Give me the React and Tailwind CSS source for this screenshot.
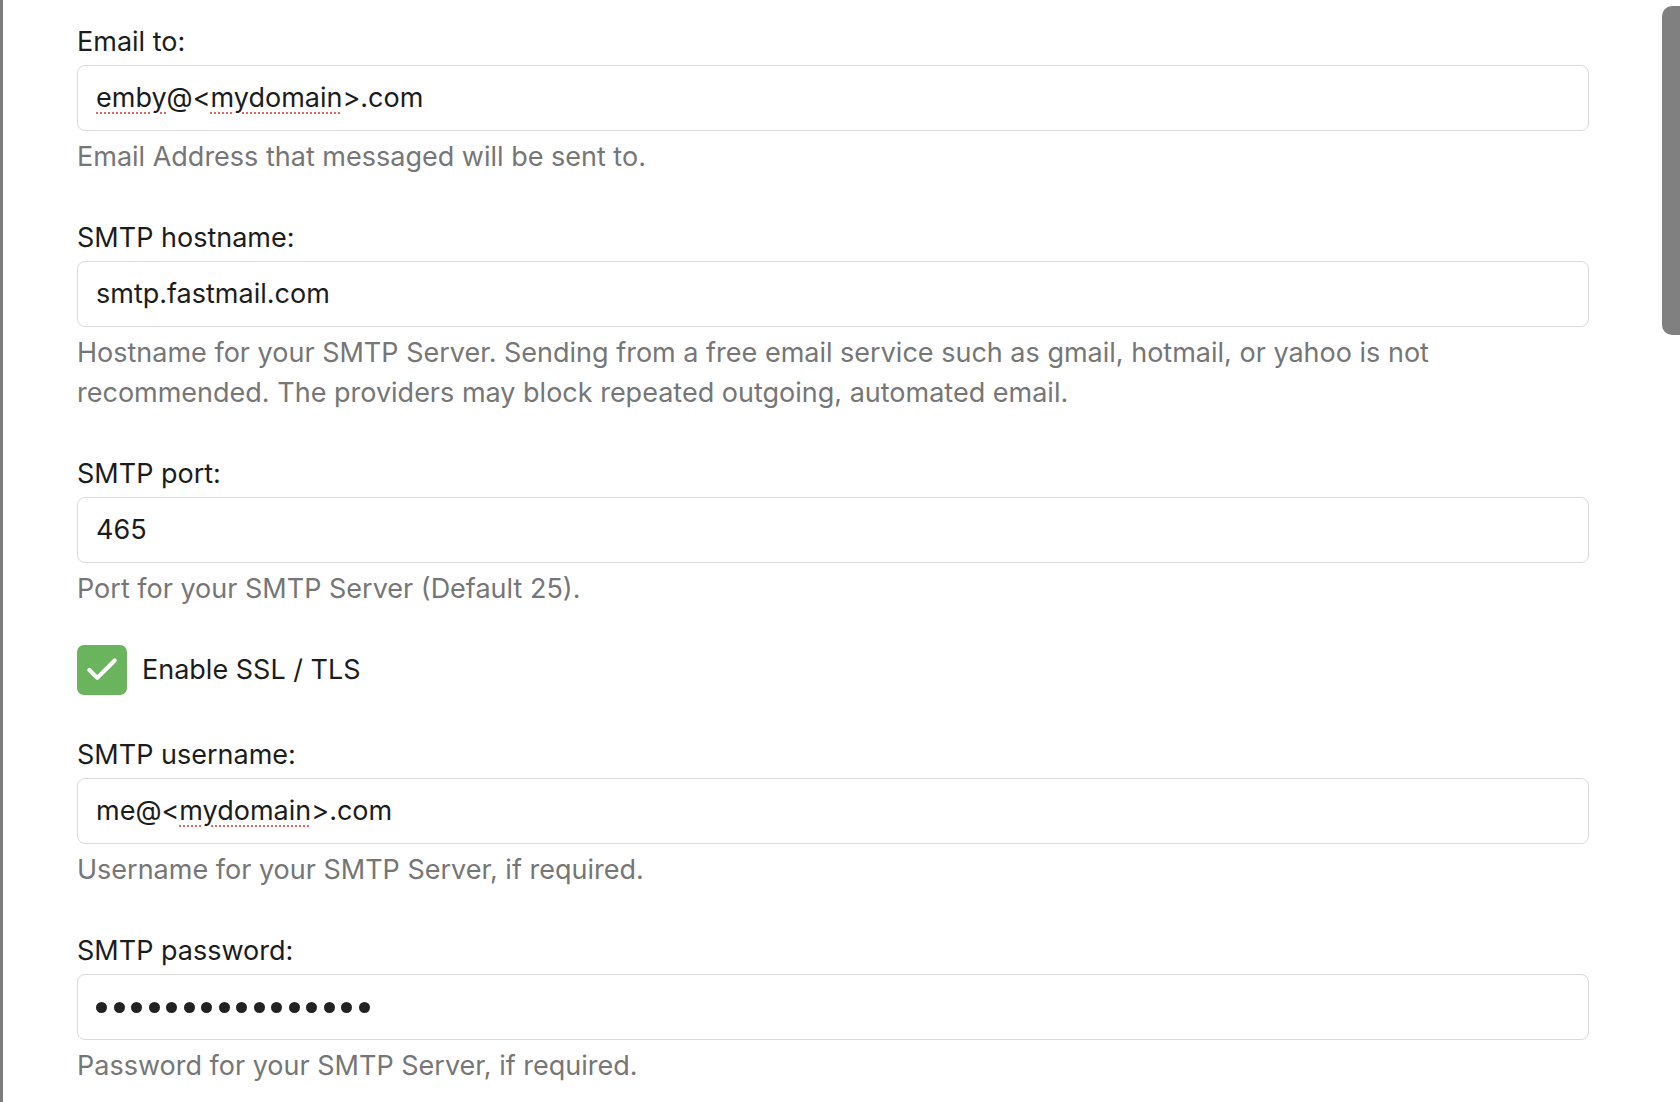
import { Check } from "lucide-react";

const font = { fontFamily: "Inter, 'Noto Sans', sans-serif" };

function Spell({ children }) {
  return (
    <span className="underline decoration-dotted decoration-[#e06666] decoration-2 underline-offset-[6px]">
      {children}
    </span>
  );
}

function Field({ label, help, children }) {
  return (
    <div className="flex flex-col">
      <label className="text-[27px] leading-[40px] text-[#1c1c1c]">{label}</label>
      <div className="mt-[3px] h-[66px] w-full rounded-[8px] border border-[#dadada] bg-white flex items-center pl-[18px] text-[27px] text-[#1c1c1c]">
        {children}
      </div>
      {help && (
        <p className="mt-[6px] text-[27px] leading-[40px] text-[#767676] pr-[100px]">{help}</p>
      )}
    </div>
  );
}

export default function App() {
  return (
    <div className="relative w-[1680px] h-[1102px] overflow-hidden bg-white" style={font}>
      <div className="flex h-full">
        {/* left frame edge */}
        <div className="w-[3px] h-full bg-[#7d7d7d] shrink-0" />

        <div className="flex-1 pl-[74px] pr-[91px] pt-[22px] flex flex-col gap-[41px]">
          <Field label="Email to:" help="Email Address that messaged will be sent to.">
            <span>
              <Spell>emby</Spell>@&lt;<Spell>mydomain</Spell>&gt;.com
            </span>
          </Field>

          <Field
            label="SMTP hostname:"
            help="Hostname for your SMTP Server. Sending from a free email service such as gmail, hotmail, or yahoo is not recommended. The providers may block repeated outgoing, automated email."
          >
            smtp.fastmail.com
          </Field>

          <Field label="SMTP port:" help="Port for your SMTP Server (Default 25).">
            465
          </Field>

          <div className="flex items-center gap-[15px] -mt-[5px] -mb-[1px]">
            <div className="w-[50px] h-[50px] rounded-[7px] bg-[#6ab45e] flex items-center justify-center">
              <Check className="w-[38px] h-[38px] text-white" strokeWidth={2.6} />
            </div>
            <span className="text-[27px] leading-[40px] text-[#1c1c1c]">Enable SSL / TLS</span>
          </div>

          <Field label="SMTP username:" help="Username for your SMTP Server, if required.">
            <span>
              me@&lt;<Spell>mydomain</Spell>&gt;.com
            </span>
          </Field>

          <Field label="SMTP password:" help="Password for your SMTP Server, if required.">
            <div className="flex gap-[6.5px]">
              {Array.from({ length: 16 }).map((_, i) => (
                <span key={i} className="w-[11px] h-[11px] rounded-full bg-[#222]" />
              ))}
            </div>
          </Field>
        </div>
      </div>

      {/* overlay scrollbar */}
      <div className="absolute right-0 top-[6px] w-[18px] h-[329px] rounded-l-[10px] bg-[#808080]" />
    </div>
  );
}
